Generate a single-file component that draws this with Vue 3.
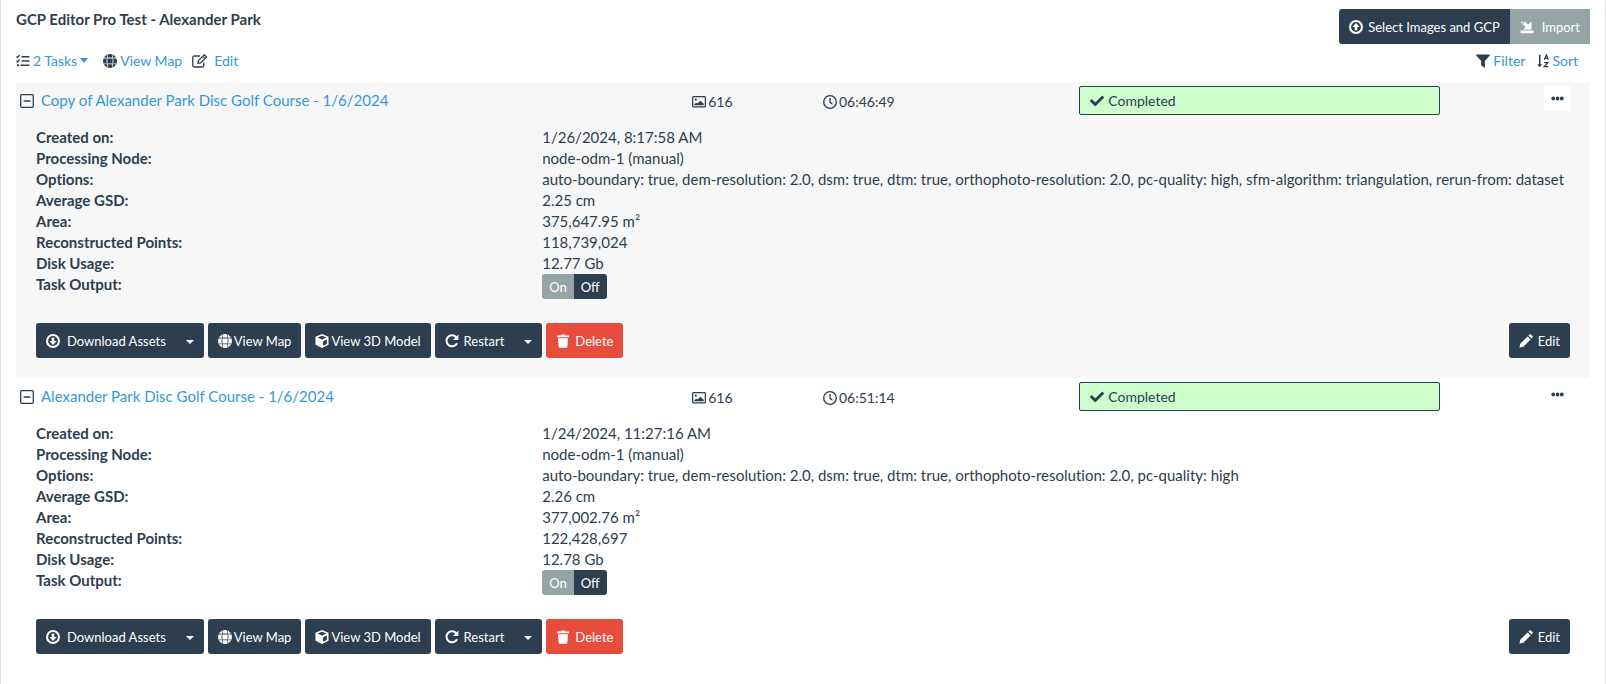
<template>
  <main class="project">
    <header class="project-header">
      <h1 class="project-title">GCP Editor Pro Test - Alexander Park</h1>
      <div class="btn-group">
        <button type="button" class="btn btn-primary">
          <svg class="icon" viewBox="0 0 14 14"><path fill-rule="evenodd" :d="icons.circleUp" /></svg>
          Select Images and GCP
        </button>
        <button type="button" class="btn btn-default btn-import">
          <svg class="icon" viewBox="0 0 14 14"><path :d="icons.importArrow" /></svg>
          Import
        </button>
      </div>
    </header>

    <nav class="project-links">
      <a href="#tasks" class="tool-link">
        <svg class="icon" viewBox="0 0 14 14">
          <path class="stroke" d="M.5 2.5l1 1L3.7 1M.5 7l1 1 2.2-2.5" />
          <path d="M5.5 2h8v1.6h-8zM5.5 6.2h8v1.6h-8zM4.5 10.5h9v1.6h-9zM1 10.2h2v2H1z" />
        </svg>
        2 Tasks
        <svg class="caret-down" viewBox="0 0 8 5"><path d="M0 0h8L4 5z" /></svg>
      </a>
      <a href="#map" class="tool-link link-map">
        <svg class="icon" viewBox="0 0 14 14"><path fill-rule="evenodd" :d="icons.globe" /></svg>
        View Map
      </a>
      <a href="#edit" class="tool-link link-edit">
        <svg class="icon icon-wide" viewBox="0 0 16 14">
          <path class="stroke" d="M8 2H2.2Q.8 2 .8 3.4v8.2Q.8 13 2.2 13h8.2q1.4 0 1.4-1.4V8.5M6 9.2l.5-2.6L12.3.9l2.2 2.2-5.8 5.7zM10.8 2.4l2.2 2.2" />
        </svg>
        Edit
      </a>
      <div class="list-tools">
        <a href="#filter" class="tool-link">
          <svg class="icon" viewBox="0 0 14 14"><path d="M.6.5h12.8q.9.2.3 1L8.9 7v6.2q-.2.7-.8.4L5.4 11.5q-.3-.2-.3-.7V7L.3 1.5q-.6-.8.3-1z" /></svg>
          Filter
        </a>
        <a href="#sort" class="tool-link">
          <svg class="icon icon-sort" viewBox="0 0 12 14">
            <path d="M2 .8h1.500v9.400h1.700L2.700 13.300.2 10.200H2z" />
            <path class="stroke" d="M7.300 5.800L9.300 1l2 4.800M8 4.300h2.600M7.200 8.600h3.700l-3.700 4h4" />
          </svg>
          Sort
        </a>
      </div>
    </nav>

    <section v-for="task in tasks" :key="task.id" class="task">
      <div class="task-header">
        <div class="task-name">
          <button type="button" class="toggle" aria-label="Collapse task">
            <svg class="icon" viewBox="0 0 14 14">
              <path class="stroke" d="M1.700.7h10.600q1 0 1 1v10.600q0 1-1 1H1.700q-1 0-1-1V1.700q0-1 1-1zM3.600 7h6.800" />
            </svg>
          </button>
          <a :href="'#task-' + task.id">{{ task.name }}</a>
        </div>
        <div class="task-stat">
          <svg class="icon" viewBox="0 0 14 14">
            <path class="stroke" d="M1.400 1.700h11.200q.8 0 .8.800v8.500q0 .8-.8.800H1.400q-.8 0-.8-.8V2.500q0-.8.8-.8z" />
            <path d="M2.300 10.200V9l2-1.300 1.200.8 2.800-2.700 3.400 2.900v1.500zM2.700 4.600a1.100 1.100 0 1 0 2.200 0a1.100 1.100 0 1 0-2.200 0z" />
          </svg>
          {{ task.images }}
        </div>
        <div class="task-stat">
          <svg class="icon" viewBox="0 0 14 14">
            <circle class="stroke" cx="7" cy="7" r="6.300" />
            <path class="stroke" d="M7 3v4.300l2.300 1.600" />
          </svg>
          {{ task.time }}
        </div>
        <div class="status">
          <svg class="icon" viewBox="0 0 512 512"><path :d="icons.check" /></svg>
          Completed
        </div>
        <button type="button" class="btn-more" aria-label="Task actions">
          <svg viewBox="0 0 13 5"><path d="M.3 2.500a1.900 1.900 0 1 0 3.800 0a1.900 1.900 0 1 0-3.800 0zM4.600 2.500a1.900 1.900 0 1 0 3.800 0a1.900 1.900 0 1 0-3.800 0zM8.900 2.500a1.900 1.900 0 1 0 3.800 0a1.900 1.900 0 1 0-3.800 0z" /></svg>
        </button>
      </div>

      <div class="task-body">
        <table class="details">
          <tbody>
            <tr v-for="row in task.details" :key="row[0]">
              <th scope="row">{{ row[0] }}:</th>
              <td>{{ row[1] }}</td>
            </tr>
            <tr>
              <th scope="row">Task Output:</th>
              <td>
                <div class="btn-group">
                  <button type="button" class="btn btn-small btn-default" @click="task.output = true">On</button>
                  <button type="button" class="btn btn-small btn-primary" @click="task.output = false">Off</button>
                </div>
              </td>
            </tr>
          </tbody>
        </table>

        <div class="actions">
          <div class="btn-group">
            <button type="button" class="btn btn-primary btn-download">
              <svg class="icon" viewBox="0 0 14 14"><path fill-rule="evenodd" :d="icons.circleDown" /></svg>
              Download Assets
            </button>
            <button type="button" class="btn btn-primary" aria-label="More downloads">
              <svg class="caret" viewBox="0 0 8 4"><path d="M0 0h8L4 4z" /></svg>
            </button>
          </div>
          <button type="button" class="btn btn-primary btn-tight">
            <svg class="icon" viewBox="0 0 14 14"><path fill-rule="evenodd" :d="icons.globe" /></svg>
            View Map
          </button>
          <button type="button" class="btn btn-primary btn-tight">
            <svg class="icon" viewBox="0 0 14 14"><path fill-rule="evenodd" d="M7 0l6.500 2.800v8L7 14 .5 10.800v-8zM2.600 3.600L7 5.500l4.400-1.900L7 1.800zM8 7.200v4.600l3.900-1.900V5.500z" /></svg>
            View 3D Model
          </button>
          <div class="btn-group">
            <button type="button" class="btn btn-primary">
              <svg class="icon" viewBox="0 0 14 14">
                <path class="stroke thick" d="M11.400 3.500A5.500 5.500 0 1 0 12 9.200" />
                <path d="M13.400.5v5.500H7.900z" />
              </svg>
              Restart
            </button>
            <button type="button" class="btn btn-primary" aria-label="Restart from">
              <svg class="caret" viewBox="0 0 8 4"><path d="M0 0h8L4 4z" /></svg>
            </button>
          </div>
          <button type="button" class="btn btn-danger">
            <svg class="icon" viewBox="0 0 14 14"><path d="M1 1.600h3.600L5.200.6h3.600l.6 1H13v1.700H1zM2 4.200h10l-.7 8.600q-.1.900-1 .9H3.700q-.9 0-1-.9z" /></svg>
            Delete
          </button>
          <button type="button" class="btn btn-primary btn-edit">
            <svg class="icon" viewBox="0 0 14 14"><path d="M.4 13.600l.9-3.900 7.300-7.300 3 3-7.300 7.300zM9.400 1.600l1-1q.8-.7 1.600 0l1.400 1.400q.7.800 0 1.600l-1 1z" /></svg>
            Edit
          </button>
        </div>
      </div>
    </section>
  </main>
</template>

<script setup>
import { ref } from 'vue'

const icons = {
  circleUp: 'M7 0a7 7 0 1 0 0 14A7 7 0 1 0 7 0zM7 2.100a4.900 4.900 0 1 1 0 9.800a4.900 4.900 0 1 1 0-9.800zM7 3.100l3.700 3.900H8.300v3.300H5.700V7H3.300z',
  circleDown: 'M7 0a7 7 0 1 0 0 14A7 7 0 1 0 7 0zM7 2.100a4.900 4.900 0 1 1 0 9.800a4.900 4.900 0 1 1 0-9.800zM7 10.900L3.300 7h2.400V3.700h2.600V7h2.400z',
  importArrow: 'M.6 10.500h12.800v2.700H.6zM11.500 1.200v8.300H3.200l2.500-2.500L2.500 3.800 4.800 1.500 8 4.700zM.8 2.800L2.300 1.300l.8.8-1.500 1.500z',
  globe: 'M7 0a7 7 0 1 0 0 14A7 7 0 1 0 7 0zM4.400 4.400h5.200v-.8H4.400zM.8 4.400h2.800v-.8H.8zM10.400 4.400h2.800v-.8h-2.800zM.8 10.200h2.800v-.8H.8zM4.400 10.200h5.200v-.8H4.400zM10.400 10.200h2.800v-.8h-2.800zM4.400.8Q2.600 7 4.400 13.200L5 13Q3.600 7 5 1zM9.600.8Q11.400 7 9.600 13.200L9 13Q10.400 7 9 1z',
  check: 'M173.898 439.404l-166.400-166.400c-9.997-9.997-9.997-26.206 0-36.204l36.203-36.204c9.997-9.998 26.207-9.998 36.204 0L192 312.690 432.095 72.596c9.997-9.997 26.207-9.997 36.204 0l36.203 36.204c9.997 9.997 9.997 26.206 0 36.204l-294.400 294.401c-9.998 9.997-26.207 9.997-36.204-.001z'
}

const tasks = ref([
  {
    id: 2,
    name: 'Copy of Alexander Park Disc Golf Course - 1/6/2024',
    images: 616,
    time: '06:46:49',
    output: false,
    details: [
      ['Created on', '1/26/2024, 8:17:58 AM'],
      ['Processing Node', 'node-odm-1 (manual)'],
      ['Options', 'auto-boundary: true, dem-resolution: 2.0, dsm: true, dtm: true, orthophoto-resolution: 2.0, pc-quality: high, sfm-algorithm: triangulation, rerun-from: dataset'],
      ['Average GSD', '2.25 cm'],
      ['Area', '375,647.95 m²'],
      ['Reconstructed Points', '118,739,024'],
      ['Disk Usage', '12.77 Gb']
    ]
  },
  {
    id: 1,
    name: 'Alexander Park Disc Golf Course - 1/6/2024',
    images: 616,
    time: '06:51:14',
    output: false,
    details: [
      ['Created on', '1/24/2024, 11:27:16 AM'],
      ['Processing Node', 'node-odm-1 (manual)'],
      ['Options', 'auto-boundary: true, dem-resolution: 2.0, dsm: true, dtm: true, orthophoto-resolution: 2.0, pc-quality: high'],
      ['Average GSD', '2.26 cm'],
      ['Area', '377,002.76 m²'],
      ['Reconstructed Points', '122,428,697'],
      ['Disk Usage', '12.78 Gb']
    ]
  }
])
</script>

<style>
body {
  background: #fff;
}
</style>

<style scoped>
.project {
  box-sizing: border-box;
  min-height: 100vh;
  padding: 9px 15px;
  border: solid #e2e2e2;
  border-width: 0 1px;
  color: #2c3e50;
  font-family: Lato, "Liberation Sans", sans-serif;
  font-size: 15px;
  font-variant-ligatures: none;
  line-height: 21px;
}

a {
  color: #3498db;
  text-decoration: none;
}

.icon {
  width: 14px;
  height: 14px;
  flex: none;
  fill: currentColor;
}

.icon-wide {
  width: 16px;
}

.icon-sort {
  width: 12px;
}

.stroke {
  fill: none;
  stroke: currentColor;
  stroke-width: 1.3;
}

.thick {
  stroke-width: 2;
}

.project-header {
  display: flex;
  justify-content: space-between;
  align-items: flex-start;
}

.project-title {
  margin: 0;
  font-size: 15px;
  font-weight: 700;
}

.btn-group {
  display: flex;
}

.btn {
  display: flex;
  align-items: center;
  gap: 5px;
  height: 35px;
  padding: 0 10px;
  border: 0;
  border-radius: 3px;
  color: #fff;
  font-family: inherit;
  font-size: 13px;
  line-height: 20px;
  white-space: nowrap;
  cursor: pointer;
}

.btn-primary {
  background: #2c3e50;
}

.btn-default {
  background: #95a5a6;
}

.btn-danger {
  background: #e74c3c;
}

.btn-group .btn:not(:last-child) {
  border-top-right-radius: 0;
  border-bottom-right-radius: 0;
}

.btn-group .btn:not(:first-child) {
  border-top-left-radius: 0;
  border-bottom-left-radius: 0;
}

.btn-group .btn-import {
  gap: 8px;
  border-radius: 0;
}

.btn-download {
  gap: 7px;
}

.btn-tight {
  gap: 2px;
}

.btn-small {
  height: 25px;
  padding: 0 7px;
}

.caret {
  width: 8px;
  height: 4px;
  margin-top: 2px;
  fill: currentColor;
}

.project-links {
  display: flex;
  align-items: center;
  padding: 6px 12px 11px 0;
  font-size: 14px;
}

.tool-link {
  display: flex;
  align-items: center;
  gap: 3px;
}

.tool-link .icon {
  color: #2c3e50;
}

.caret-down {
  width: 8px;
  height: 5px;
  fill: currentColor;
}

.link-map {
  margin-left: 15px;
}

.link-edit {
  gap: 6px;
  margin-left: 10px;
}

.list-tools {
  display: flex;
  gap: 12px;
  margin-left: auto;
}

.task {
  background: #fff;
}

.task:nth-of-type(odd) {
  background: #f7f7f7;
}

.task-header {
  display: grid;
  grid-template-columns: 5.14fr 1fr 1.96fr 2.76fr 1fr;
  align-items: start;
  padding: 4px 19px 0 4px;
}

.task-name {
  display: flex;
  align-items: center;
  gap: 7px;
  padding-top: 4px;
}

.toggle {
  display: flex;
  padding: 0;
  border: 0;
  background: none;
  color: inherit;
  cursor: pointer;
}

.task-stat {
  display: flex;
  align-items: center;
  gap: 2px;
  padding-top: 5px;
  font-size: 14px;
}

.status {
  display: flex;
  align-items: center;
  gap: 4px;
  padding: 3px 10px;
  border: 1px solid #2c3e50;
  border-radius: 2px;
  background: #ccffcc;
  font-size: 14px;
}

.btn-more {
  display: flex;
  justify-content: center;
  align-items: center;
  justify-self: end;
  width: 27px;
  height: 25px;
  padding: 0;
  border: 0;
  border-radius: 3px;
  background: #fff;
  color: #2c3e50;
  cursor: pointer;
}

.btn-more svg {
  width: 13px;
  height: 5px;
  fill: currentColor;
}

.task-body {
  padding: 12px 20px 20px;
}

.details {
  width: 100%;
  border-collapse: collapse;
}

.details th,
.details td {
  padding: 0;
  text-align: left;
  vertical-align: top;
}

.details th {
  width: 33%;
  font-weight: 700;
}

.actions {
  display: flex;
  gap: 4px;
  margin-top: 24px;
}

.btn-edit {
  margin-left: auto;
}
</style>
